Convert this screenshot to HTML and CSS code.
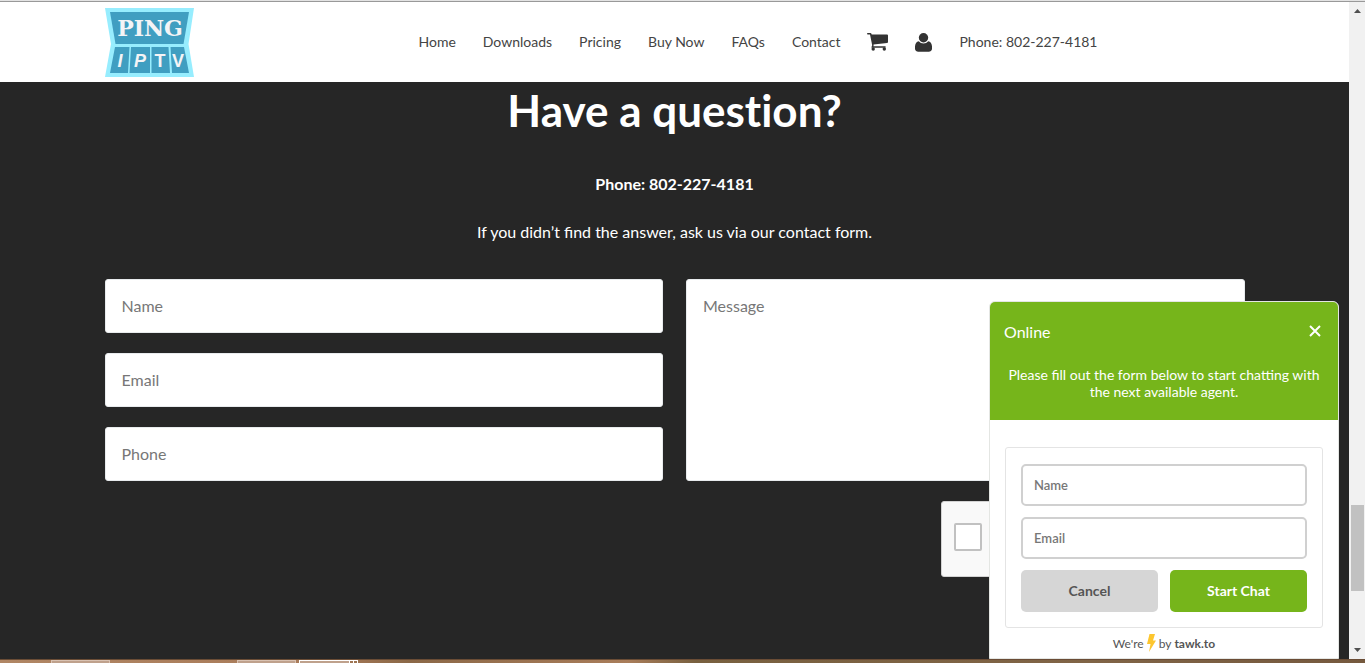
FILE: index.html
```html
<!DOCTYPE html>
<html lang="en">
<head>
<meta charset="utf-8">
<title>Ping IPTV - Contact</title>
<link rel="stylesheet" href="styles.css">
</head>
<body>
<div class="frame-top"></div>
<div class="viewport">
  <div class="page">
    <header class="site-header">
      <div class="container header-inner">
        <a class="logo" href="#" aria-label="Ping IPTV">
          <svg width="90" height="70" viewBox="0 0 90 70">
            <path d="M0 0H89L83.500 36L89 69H0L6 36Z" fill="#97edfe"/>
            <path d="M5 4H84L78.500 36H10.500Z" fill="#409ec1"/>
            <path d="M10 39H24.500L23 65H5Z M26 39H45V65H24.500Z M46.500 39H63.500L65 65H46.500Z M65.500 39H79L84 65H67Z" fill="#409ec1"/>
            <g fill="#f4f4f6" font-weight="bold">
              <text class="logo-slab" x="45" y="28" text-anchor="middle" font-size="22">PING</text>
              <g class="logo-sans" font-size="18" text-anchor="middle">
                <text x="15" y="59" font-style="italic">I</text>
                <text x="35" y="59" font-style="italic">P</text>
                <text x="55" y="59">T</text>
                <text x="73" y="59">V</text>
              </g>
            </g>
          </svg>
        </a>
        <nav class="nav">
          <a href="#">Home</a>
          <a href="#">Downloads</a>
          <a href="#">Pricing</a>
          <a href="#">Buy Now</a>
          <a href="#">FAQs</a>
          <a href="#">Contact</a>
          <a href="#" aria-label="Cart"><svg width="21" height="18" viewBox="0 0 21 18" fill="#333"><path d="M0 .8Q0 0 .8 0H3.600Q4.500 0 4.700 1.500H20Q21 1.500 21 2.500V9Q21 9.800 20 10L6.500 11.600Q6.800 12.500 6.400 13.200H18Q18.800 13.200 18.800 14T18 14.800H5.200Q4.300 14.800 4.500 13.900L5.200 12.200L3 1.600H.8Q0 1.600 0 .8Z"/><circle cx="6.200" cy="16" r="1.700"/><circle cx="17.300" cy="16" r="1.700"/></svg></a>
          <a href="#" aria-label="Account"><svg width="17" height="19" viewBox="0.500 0 17 19" fill="#333"><circle cx="9" cy="4.800" r="4.700"/><path d="M4.200 8.300Q6.200 10.500 9 10.500T13.800 8.300Q17.500 8.700 17.600 15Q17.600 18.700 14.500 18.700H3.500Q.4 18.700 .4 15Q.5 8.700 4.200 8.300Z"/></svg></a>
          <a href="#">Phone: 802-227-4181</a>
        </nav>
      </div>
    </header>
    <main class="container question">
      <h1>Have a question?</h1>
      <p class="phone">Phone: 802-227-4181</p>
      <p class="intro">If you didn’t find the answer, ask us via our contact form.</p>
      <form class="contact-form">
        <div class="fields">
          <input type="text" placeholder="Name" aria-label="Name">
          <input type="email" placeholder="Email" aria-label="Email">
          <input type="tel" placeholder="Phone" aria-label="Phone">
        </div>
        <textarea placeholder="Message" aria-label="Message"></textarea>
        <div class="captcha"><input type="checkbox" aria-label="Verification"></div>
      </form>
    </main>
    <aside class="chat" aria-label="Chat">
      <div class="chat-head">
        <div class="chat-bar">
          <span>Online</span>
          <button class="chat-close" type="button" aria-label="Close"><svg width="12" height="12" viewBox="0 0 12 12" fill="none" stroke="#fff" stroke-width="2"><path d="M1 1L11 11M11 1L1 11"/></svg></button>
        </div>
        <p>Please fill out the form below to start chatting with the next available agent.</p>
      </div>
      <div class="chat-body">
        <form class="chat-form">
          <input type="text" placeholder="Name" aria-label="Chat name">
          <input type="email" placeholder="Email" aria-label="Chat email">
          <div class="chat-actions">
            <button class="cancel" type="button">Cancel</button>
            <button class="start" type="button">Start Chat</button>
          </div>
        </form>
        <div class="chat-credit">We're <svg width="9" height="18" viewBox="0 0 9 18"><path d="M2.500 0H8L6 6.500H9L2 18L3.500 10H0Z" fill="#fdc62e"/></svg> by <a href="#">tawk.to</a></div>
      </div>
    </aside>
  </div>
  <div class="scrollbar">
    <svg width="7" height="4" viewBox="0 0 7 4"><path d="M3.500 0L7 4H0Z" fill="#505050"/></svg>
    <div class="track"><div class="thumb"></div></div>
    <svg width="7" height="4" viewBox="0 0 7 4"><path d="M0 0H7L3.500 4Z" fill="#505050"/></svg>
  </div>
</div>
<div class="taskbar">
  <span class="task first"></span><span class="task second"></span><span class="task active"></span><span class="edge"></span><span class="edge"></span><span class="wood"></span>
</div>
</body>
</html>
```

FILE: styles.css
```css
* { box-sizing: border-box; }
body {
  margin: 0;
  height: 100vh;
  overflow: hidden;
  display: flex;
  flex-direction: column;
  font-family: Lato, "Liberation Sans", sans-serif;
  color: #333;
}
a { color: inherit; text-decoration: none; }
p, h1 { margin: 0; }
input, textarea, button { font-family: inherit; margin: 0; }

.frame-top { height: 2px; flex: none; background: #e3e3e3; border-bottom: 1px solid #999; }
.viewport { flex: 1; min-height: 0; display: flex; }
.page { flex: 1; position: relative; background: #262626; overflow: hidden; }
.container { width: 100%; max-width: 1140px; margin: 0 auto; }

.site-header { background: #fff; }
.header-inner { display: flex; align-items: center; height: 80px; }
.logo { display: block; padding-top: 2px; }
.logo svg, .nav svg { display: block; }
.logo-slab { font-family: "DejaVu Serif", serif; }
.logo-sans { font-family: "Liberation Sans", sans-serif; }
.nav { display: flex; align-items: center; gap: 27px; margin: 0 147px 0 auto; font-size: 14px; line-height: 20px; color: #444; }

.question { text-align: center; color: #fff; }
h1 { font-size: 44px; line-height: 56px; font-weight: 700; font-variant-ligatures: none; }
.phone { margin-top: 34px; font-size: 16px; line-height: 24px; font-weight: 700; }
.intro { margin-top: 24px; font-size: 16px; line-height: 24px; }
.contact-form { margin-top: 35px; display: grid; grid-template-columns: 1fr 1fr; gap: 20px 23px; }
.fields { display: grid; gap: 20px; }
.fields input, .contact-form textarea {
  display: block;
  width: 100%;
  border: 1px solid #e8ebed;
  border-radius: 3px;
  background: #fff;
  padding: 14px 16px 16px;
  font-size: 16px;
  line-height: 24px;
}
.fields input { height: 54px; }
.contact-form textarea { resize: none; height: 100%; }
::placeholder { color: #777; opacity: 1; }
.captcha {
  grid-column: 2;
  justify-self: end;
  width: 304px;
  height: 76px;
  padding: 21px 12px;
  border: 1px solid #d3d3d3;
  border-radius: 3px;
  background: #f9f9f9;
  text-align: left;
}
.captcha input {
  appearance: none;
  display: block;
  width: 28px;
  height: 28px;
  border: 2px solid #c1c1c1;
  border-radius: 2px;
  background: #fff;
}

.chat {
  position: absolute;
  right: 10px;
  bottom: 0;
  width: 350px;
  border: 1px solid #e4e6e3;
  border-radius: 6px 6px 0 0;
  background: #fff;
  overflow: hidden;
}
.chat-head { background: #76b51b; color: #fff; padding: 20px 14px; }
.chat-bar { display: flex; justify-content: space-between; align-items: center; font-size: 16px; line-height: 20px; }
.chat-close { border: 0; background: none; padding: 0 3px 2px 0; }
.chat-close svg { display: block; }
.chat-head p { margin-top: 24px; font-size: 14px; line-height: 17px; text-align: center; }
.chat-body { padding: 27px 15px 0; }
.chat-form { display: grid; gap: 11px; padding: 16px 15px 15px; border: 1px solid #e4e4e4; border-radius: 3px; }
.chat-form input {
  width: 100%;
  height: 42px;
  padding: 0 11px;
  border: 2px solid #d0d0d0;
  border-radius: 5px;
  font-size: 13px;
  font-weight: 600;
}
.chat-actions { display: grid; grid-template-columns: 1fr 1fr; gap: 12px; }
.chat-actions button { height: 42px; padding: 0 0 2px; border: 0; border-radius: 5px; font-size: 14px; font-weight: 700; }
.cancel { background: #d6d6d6; color: #555; }
.start { background: #76b51b; color: #fff; }
.chat-credit { display: flex; justify-content: center; align-items: center; gap: 3px; height: 30px; font-size: 12px; color: #555; }
.chat-credit a { font-weight: 700; }

.scrollbar { width: 16px; flex: none; background: #f1f1f1; display: flex; flex-direction: column; align-items: center; padding: 7px 1px; }
.scrollbar svg { display: block; flex: none; }
.track { flex: 1; width: 100%; display: flex; flex-direction: column; padding-top: 492px; }
.thumb { height: 86px; margin: 0 0 0 1px; background: #c1c1c1; }

.taskbar { height: 4px; flex: none; display: flex; border-top: 1px solid #6a4c35; background: linear-gradient(90deg, #b08664, #a87a58 24%, #8b6847 30%, #a97d5a 46%, #78603f 51%, #806446 80%, #75593e); }
.task { width: 59px; background: #bfa18c; border: 1px solid #d9c2b2; border-bottom: 0; }
.first { margin-left: 51px; }
.second { margin-left: 127px; }
.active { width: 51px; margin-left: 3px; border-color: #fff; }
.edge { width: 4px; border: 1px solid #fff; border-left: 0; border-bottom: 0; }
.wood { flex: 1; }
```
